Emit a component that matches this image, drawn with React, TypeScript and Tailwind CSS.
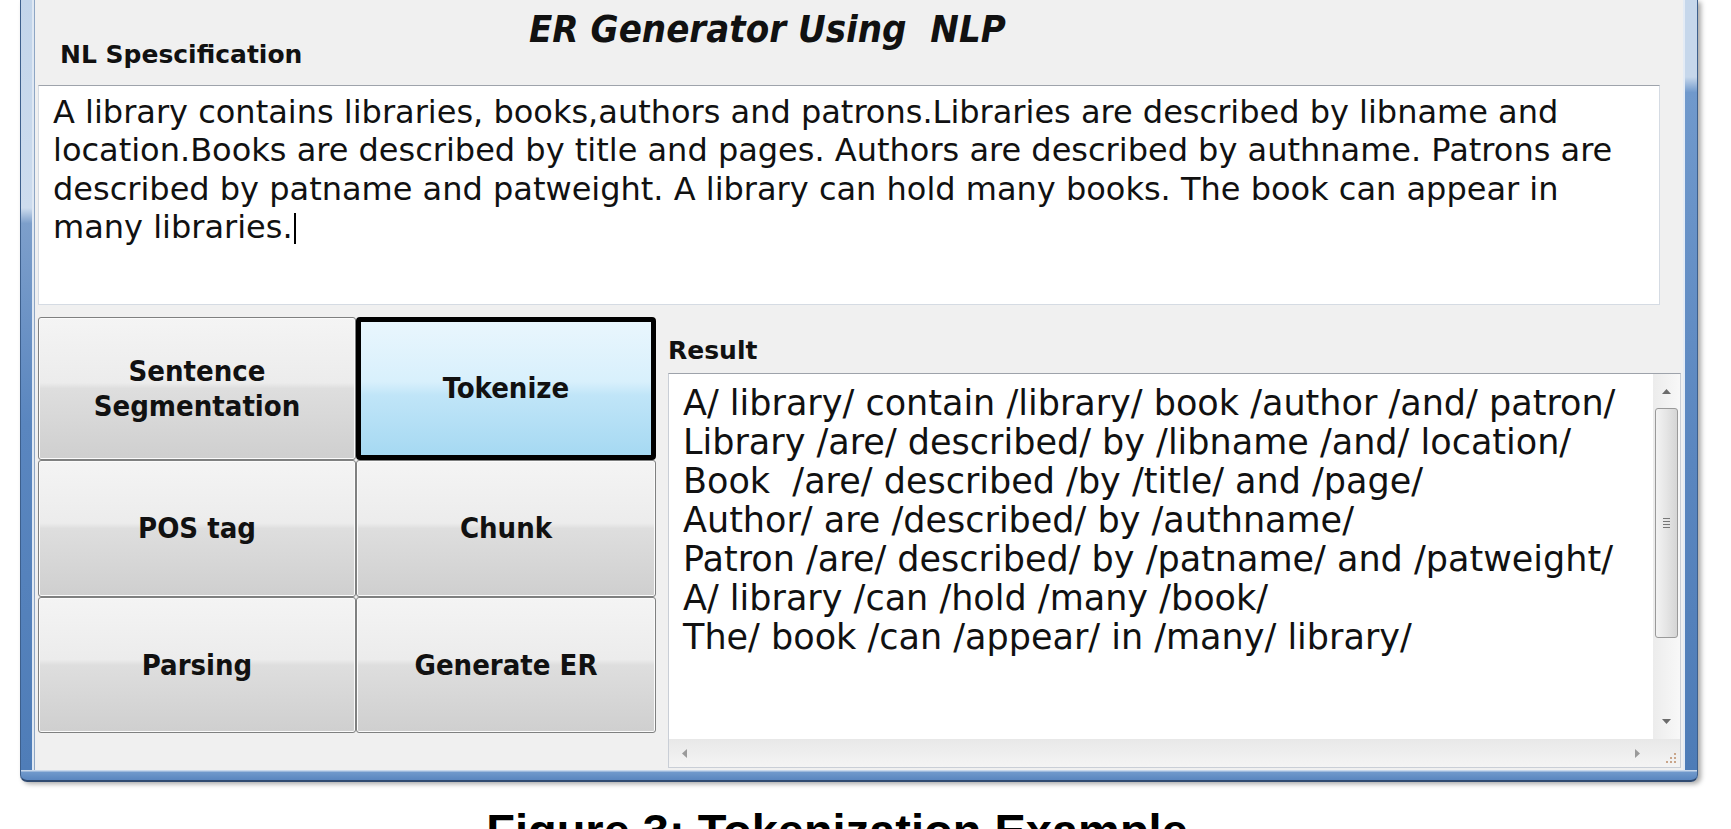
import React from "react";

const UI = "font-['DejaVu_Sans_Condensed','DejaVu_Sans',sans-serif]";
const SANS = "font-['DejaVu_Sans',Verdana,sans-serif]";

function Btn({ children, active }: { children: React.ReactNode; active?: boolean }) {
  if (active) {
    return (
      <div className="flex items-center justify-center rounded-[4px] border-[5px] border-black bg-[linear-gradient(to_bottom,#e9f6fd_0%,#d8f0fc_45%,#c0e5f8_55%,#a6d9f2_100%)]">
        <span className={`${UI} font-bold text-[29px] leading-[35px] text-[#111] text-center`}>{children}</span>
      </div>
    );
  }
  return (
    <div className="flex items-center justify-center rounded-[3px] border border-[#7f8080] bg-[linear-gradient(to_bottom,#f4f4f4_0%,#ececec_46%,#dedede_50%,#cfcfcf_100%)] shadow-[inset_0_0_0_1px_#fbfbfb]">
      <span className={`${UI} font-bold text-[29px] leading-[35px] text-[#111] text-center`}>{children}</span>
    </div>
  );
}

export default function App() {
  const lines = [
    "A/ library/ contain /library/ book /author /and/ patron/",
    "Library /are/ described/ by /libname /and/ location/",
    "Book  /are/ described /by /title/ and /page/",
    "Author/ are /described/ by /authname/",
    "Patron /are/ described/ by /patname/ and /patweight/",
    "A/ library /can /hold /many /book/",
    "The/ book /can /appear/ in /many/ library/",
  ];
  return (
    <div className="w-[1731px] h-[829px] bg-white overflow-hidden flex flex-col">
      {/* window */}
      <div className="ml-[20px] w-[1678px] flex flex-col shadow-[3px_2px_5px_rgba(0,0,0,0.35)] rounded-b-[7px]">
        <div className="flex h-[770px]">
          {/* left frame */}
          <div className="w-[14px] border-l border-[#3d5f8c] bg-[linear-gradient(to_bottom,#c3d5ea_0%,#cddcee_27%,#7d9fcb_29%,#5a86bf_55%,#4f7db8_100%)] flex justify-end">
            <div className="w-[2px] bg-[#dfe8f3]" />
          </div>

          {/* content */}
          <div className="flex-1 bg-[#f0f0f0] flex flex-col border-l border-[#8ea6c4]">
            {/* header */}
            <div className="h-[85px] grid grid-cols-[494px_1fr]">
              <div className={`pl-[25px] pt-[40px] ${SANS} font-bold text-[25px] leading-[29px] text-[#111] whitespace-nowrap`}>
                NL Spescification
              </div>
              <div className={`pt-[7px] ${UI} font-bold italic text-[38px] leading-[44px] text-[#111] whitespace-pre`}>
                ER Generator Using  NLP
              </div>
            </div>

            {/* textarea */}
            <div className="ml-[3px] mr-[23px] h-[220px] bg-white border border-[#d5dbe3] border-t-[#9ea3ab] pl-[14px] pt-[7px] pr-[4px]">
              <p className={`${SANS} text-[32px] leading-[38.3px] text-[#111]`}>
                A library contains libraries, books,authors and patrons.Libraries are described by libname and
                location.Books are described by title and pages. Authors are described by authname. Patrons are
                described by patname and patweight. A library can hold many books. The book can appear in many
                libraries.<span className="inline-block w-[2px] h-[31px] bg-black align-[-6px] ml-[1px]" />
              </p>
            </div>

            {/* lower */}
            <div className="mt-[12px] flex flex-1">
              <div className="ml-[3px] w-[618px] h-[416px] grid grid-cols-[318px_300px] grid-rows-[143px_137px_136px]">
                <Btn>
                  Sentence
                  <br />
                  Segmentation
                </Btn>
                <Btn active>Tokenize</Btn>
                <Btn>POS tag</Btn>
                <Btn>Chunk</Btn>
                <Btn>Parsing</Btn>
                <Btn>Generate ER</Btn>
              </div>

              <div className="ml-[12px] w-[1013px] flex flex-col">
                <div className={`mt-[19px] h-[37px] ${SANS} font-bold text-[25px] leading-[29px] text-[#111]`}>Result</div>
                <div className="h-[395px] border border-[#c9ced6] border-t-[#9ea3ab] bg-white flex flex-col">
                  <div className="flex flex-1">
                    <div className={`flex-1 pl-[14px] pt-[10px] ${SANS} text-[35px] leading-[39px] text-[#111] whitespace-pre overflow-hidden`}>
                      {lines.map((l, i) => (
                        <div key={i}>{l}</div>
                      ))}
                    </div>
                    {/* vertical scrollbar */}
                    <div className="w-[27px] bg-[linear-gradient(to_right,#ececec,#f8f8f8)] flex flex-col items-center">
                      <div className="h-[34px] flex items-center justify-center">
                        <svg width="9" height="6" viewBox="0 0 9 6"><path d="M0 6 L4.5 1 L9 6 Z" fill="#6b6b6b" /></svg>
                      </div>
                      <div className="w-[23px] h-[230px] rounded-[3px] border border-[#9a9a9a] bg-[linear-gradient(to_right,#f3f3f3,#e5e5e5_50%,#d5d5d5)] flex items-center justify-center">
                        <div className="flex flex-col gap-[2px]">
                          <div className="w-[7px] h-[1px] bg-[#777]" />
                          <div className="w-[7px] h-[1px] bg-[#777]" />
                          <div className="w-[7px] h-[1px] bg-[#777]" />
                          <div className="w-[7px] h-[1px] bg-[#777]" />
                        </div>
                      </div>
                      <div className="flex-1" />
                      <div className="h-[34px] flex items-center justify-center">
                        <svg width="9" height="6" viewBox="0 0 9 6"><path d="M0 0 L4.5 5 L9 0 Z" fill="#6b6b6b" /></svg>
                      </div>
                    </div>
                  </div>
                  {/* horizontal scrollbar */}
                  <div className="h-[28px] flex bg-[linear-gradient(to_bottom,#e8e8e8,#f4f4f4)]">
                    <div className="flex-1 flex items-center justify-between px-[12px]">
                      <svg width="6" height="9" viewBox="0 0 6 9"><path d="M6 0 L1 4.5 L6 9 Z" fill="#9a9a9a" /></svg>
                      <svg width="6" height="9" viewBox="0 0 6 9"><path d="M0 0 L5 4.5 L0 9 Z" fill="#9a9a9a" /></svg>
                    </div>
                    <div className="w-[27px] flex items-end justify-end p-[3px]">
                      <svg width="12" height="12" viewBox="0 0 12 12">
                        <rect x="9" y="1" width="2" height="2" fill="#c9a58a" />
                        <rect x="5" y="5" width="2" height="2" fill="#c9a58a" />
                        <rect x="9" y="5" width="2" height="2" fill="#c9a58a" />
                        <rect x="1" y="9" width="2" height="2" fill="#c9a58a" />
                        <rect x="5" y="9" width="2" height="2" fill="#c9a58a" />
                        <rect x="9" y="9" width="2" height="2" fill="#c9a58a" />
                      </svg>
                    </div>
                  </div>
                </div>
              </div>
            </div>
          </div>

          {/* right frame */}
          <div className="w-[15px] border-r border-[#3d5f8c] bg-[linear-gradient(to_bottom,#c6d7eb_0%,#c6d7eb_10%,#7099cc_12%,#5a86bf_60%,#4e7cb7_100%)] flex">
            <div className="w-[2px] bg-[#e3ebf5]" />
          </div>
        </div>
        {/* bottom frame */}
        <div className="h-[12px] rounded-b-[7px] border-b-2 border-[#2f4a70] border-x border-x-[#3d5f8c] bg-[linear-gradient(to_bottom,#dfe8f3_0%,#6f98cb_25%,#5a86bf_100%)]" />
      </div>

      {/* remnant strip of underlying image */}
      <div className="ml-[20px] w-[1678px] h-[9px] overflow-hidden relative bg-[#d9d9d9]">
        <div className={`absolute left-[48px] top-[-22px] ${UI} font-bold text-[30px] leading-[36px] text-[#222]`}>Parsing</div>
        <div className={`absolute left-[300px] top-[-22px] ${UI} font-bold text-[30px] leading-[36px] text-[#222]`}>Generate ER</div>
        <div className="absolute left-[545px] top-0 w-[2px] h-[9px] bg-[#333]" />
        <div className="absolute left-[600px] top-0 w-[2px] h-[9px] bg-[#333]" />
        <div className="absolute left-[655px] top-0 w-[2px] h-[9px] bg-[#333]" />
        <div className="absolute left-[790px] top-0 w-[2px] h-[9px] bg-[#333]" />
        <div className="absolute left-[870px] top-0 w-[2px] h-[9px] bg-[#333]" />
        <div className="absolute left-[1010px] top-0 w-[2px] h-[9px] bg-[#333]" />
        <div className="absolute left-[1090px] top-0 w-[2px] h-[9px] bg-[#333]" />
        <div className="absolute left-[1190px] top-0 w-[2px] h-[9px] bg-[#333]" />
        <div className="absolute left-[1300px] top-0 w-[2px] h-[9px] bg-[#333]" />
        <div className="absolute left-[1600px] top-0 w-[2px] h-[9px] bg-[#333]" />
      </div>

      {/* caption */}
      <div className="mt-[23px] flex justify-center">
        <div className="ml-[-57px] font-['Liberation_Sans',Arial,sans-serif] font-bold text-[47px] leading-[52px] text-black whitespace-nowrap">
          Figure 3: Tokenization Example
        </div>
      </div>
    </div>
  );
}
